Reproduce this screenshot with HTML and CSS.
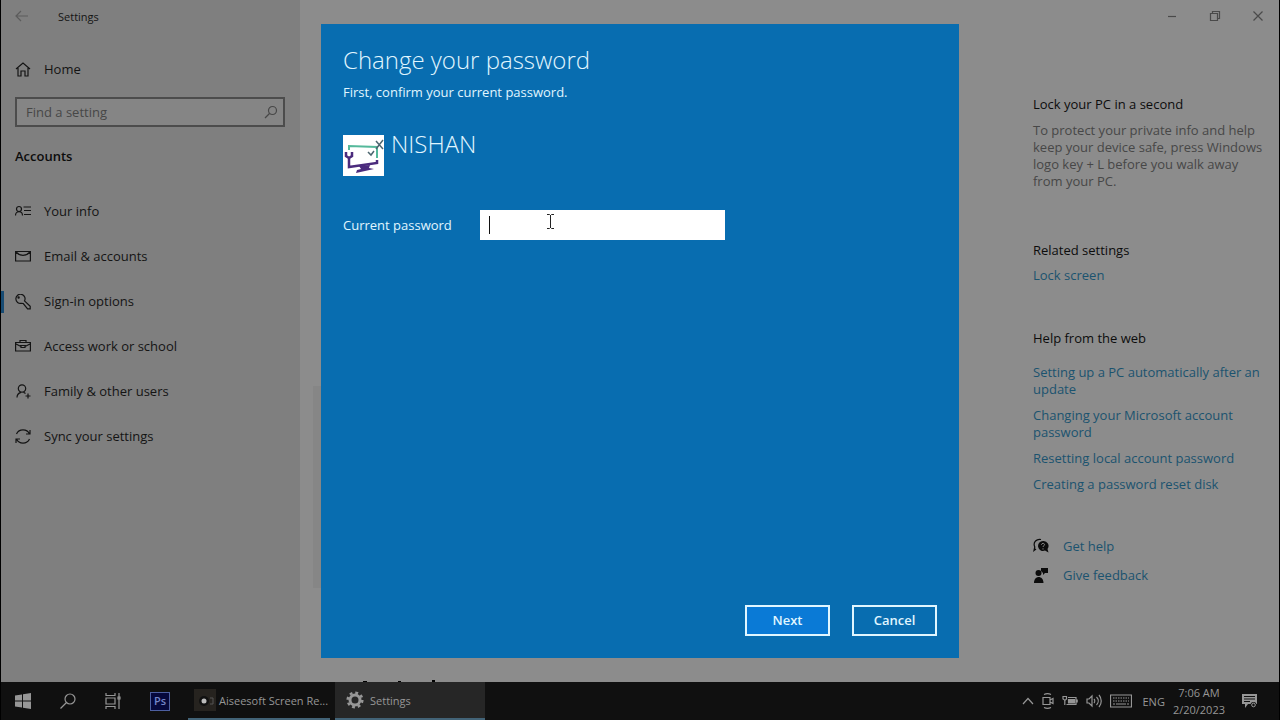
FILE: index.html
```html
<!DOCTYPE html>
<html lang="en">
<head>
<meta charset="utf-8">
<title>Settings</title>
<link rel="stylesheet" href="styles.css">
</head>
<body>
<div class="desktop">
  <div class="window">
    <aside class="sidebar">
      <header class="titlebar">
        <button class="icon-button" type="button" aria-label="Back"><svg width="14" height="12" viewBox="0 0 14 12" class="line faint"><path d="M13 6H2M6 1L1 6l5 5"/></svg></button>
        <span>Settings</span>
      </header>
      <a class="nav-item home" href="#"><svg width="16" height="16" viewBox="0 0 16 16" class="line"><path d="M1 8l7-6 7 6M3 7v8h3v-5h4v5h3V7"/></svg>Home</a>
      <div class="search">
        <input type="text" placeholder="Find a setting" aria-label="Find a setting">
        <svg width="14" height="14" viewBox="0 0 14 14" class="line"><circle cx="8.500" cy="5.500" r="4"/><path d="M5.500 8.500L1 13"/></svg>
      </div>
      <h2 class="section">Accounts</h2>
      <nav class="nav">
        <a class="nav-item" href="#"><svg width="16" height="16" viewBox="0 0 16 16" class="line"><circle cx="4" cy="5" r="2.500"/><path d="M.5 11.500c0-5 7-5 7 0M8.500 3H16M9 6.500h7M9 10.500h7"/></svg>Your info</a>
        <a class="nav-item" href="#"><svg width="16" height="16" viewBox="0 0 16 16" class="line"><path d="M.6 2.500h14.800v9.500H.6zM1 3c4 4.500 10 4.500 14 0"/></svg>Email &amp; accounts</a>
        <a class="nav-item current" href="#" aria-current="page"><svg width="16" height="16" viewBox="0 0 16 16" class="line"><path d="M9.500 7A4.600 4.600 0 1 0 6.500 9.300l1.800.2 4.300 5.300h2.600v-2.500z"/><circle cx="3.600" cy="3.500" r=".6"/></svg>Sign-in options</a>
        <a class="nav-item" href="#"><svg width="16" height="16" viewBox="0 0 16 16" class="line"><path d="M.6 3.500h14.800V12H.6zM5 3V1.500h6V3M1 5l5 2.500M15 5l-5 2.500M6 6.500h4v2H6z"/></svg>Access work or school</a>
        <a class="nav-item" href="#"><svg width="16" height="16" viewBox="0 0 16 16" class="line"><circle cx="7" cy="4.500" r="3.700"/><path d="M2 13.500c0-3 1.500-4.500 4-5.200M8.500 8.300l2 1.200M13 9.500v5M10.500 12h5"/></svg>Family &amp; other users</a>
        <a class="nav-item" href="#"><svg width="16" height="16" viewBox="0 0 16 16" class="line"><path d="M1.500 5C4-.5 12-.5 14.500 5M15 1v4h-4M14.500 10C12 15.500 4 15.500 1.500 10M1 14v-4h4"/></svg>Sync your settings</a>
      </nav>
    </aside>
    <main class="page">
      <header class="controls">
        <button class="icon-button" type="button" aria-label="Minimize"><svg width="12" height="12" viewBox="0 0 12 12" class="line dim"><path d="M2 6.500h8"/></svg></button>
        <button class="icon-button" type="button" aria-label="Restore"><svg width="12" height="12" viewBox="0 0 12 12" class="line dim"><path d="M1.500 3.500h7v7h-7zM3.500 3V1.500h7v7H9"/></svg></button>
        <button class="icon-button" type="button" aria-label="Close"><svg width="12" height="12" viewBox="0 0 12 12" class="line dim"><path d="M1.500 1.500l9 9M10.500 1.500l-9 9"/></svg></button>
      </header>
      <div class="panel"></div>
      <aside class="related">
        <section class="tip">
          <h3>Lock your PC in a second</h3>
          <p>To protect your private info and help keep your device safe, press Windows logo key + L before you walk away from your PC.</p>
        </section>
        <section class="links">
          <h3>Related settings</h3>
          <a href="#">Lock screen</a>
        </section>
        <section class="links web">
          <h3>Help from the web</h3>
          <a href="#">Setting up a PC automatically after an update</a>
          <a href="#">Changing your Microsoft account password</a>
          <a href="#">Resetting local account password</a>
          <a href="#">Creating a password reset disk</a>
        </section>
        <section class="support">
          <a href="#"><svg width="16" height="16" viewBox="0 0 16 16"><path class="line" d="M3 11L1 12.500l.8-3.500C-.5 4 4 .5 8 1.500"/><path d="M10 3a5 5 0 1 0 2 9.600l3.500 2-1-3.600A5 5 0 0 0 10 3z"/><path class="mark" d="M8.500 6.800c0-2 3.200-1.800 3 0-.1 1-1.500 1-1.500 2.200M10 10.300v1.200"/></svg>Get help</a>
          <a href="#"><svg width="16" height="16" viewBox="0 0 16 16"><circle cx="5.500" cy="6" r="3"/><path d="M1 16c0-8 9.500-8 9.500 0zM8 1h7v5h-3l-2 2V6L8 4z"/></svg>Give feedback</a>
        </section>
      </aside>
      <svg class="peek" width="80" height="2" viewBox="0 0 80 2"><path d="M2 1h4v1H2zM37 1h3v1h-3zM71 0h3v2h-3z"/></svg>
    </main>
    <div class="overlay">
      <form class="dialog" role="dialog" aria-labelledby="dialog-title">
        <h1 id="dialog-title">Change your password</h1>
        <p class="lead">First, confirm your current password.</p>
        <div class="user">
          <svg class="avatar" width="41" height="41" viewBox="0 0 41 41"><path fill="#fff" d="M0 0h41v41H0z"/><path d="M6 15v-4l28 1v11" fill="none" stroke="#55b99b" stroke-width="2"/><path d="M33 6l7 8M40 5l-7 9M25 17l3 3 3-4" fill="none" stroke="#4c6670" stroke-width="1.500"/><path d="M3 17v4l3 2 3-2v-4M6 22v10l28-4v-3" fill="none" stroke="#4b2b7d" stroke-width="2.500"/><path d="M16 31l11-1-1 3 5 1-18 4 1-3 4-1z" fill="#4b2b7d"/></svg>
          <span>NISHAN</span>
        </div>
        <div class="field">
          <label for="password">Current password</label>
          <div class="entry">
            <input id="password" type="password">
            <i class="caret"></i>
            <svg class="pointer" width="9" height="17" viewBox="0 0 9 17"><path d="M1 1.500h2.500l1 1 1-1H8M4.500 2v13M1 15.500h2.500l1-1 1 1H8"/></svg>
          </div>
        </div>
        <div class="actions">
          <button class="primary" type="button">Next</button>
          <button type="button">Cancel</button>
        </div>
      </form>
    </div>
  </div>
  <footer class="taskbar">
    <div class="launch">
      <button type="button" aria-label="Start"><svg width="16" height="16" viewBox="0 0 16 16" fill="#969696"><path d="M0 2.500l7-1v6H0zM8 1.300L16 0v7.500H8zM0 8.500h7v6l-7-1zM8 8.500h8V16l-8-1.300z"/></svg></button>
      <button type="button" aria-label="Search"><svg width="16" height="16" viewBox="0 0 16 16" class="line"><circle cx="10" cy="6" r="5"/><path d="M6.500 9.500L.5 15.500"/></svg></button>
      <button type="button" aria-label="Task view"><svg width="16" height="16" viewBox="0 0 16 16" class="line"><path d="M1 0v2.500h9V0M1 5h9v6H1zM1 16v-2.500h9V16M14 0v16"/><path d="M13 4h2v2h-2z"/></svg></button>
      <button type="button" class="ps"><span>Ps</span></button>
    </div>
    <button type="button" class="task"><svg width="22" height="22" viewBox="0 0 22 22"><path fill="#26231f" d="M0 0h22v22H0z"/><circle cx="10" cy="12" r="5" fill="#111"/><circle cx="10" cy="12" r="2.500" fill="#bbb"/><path d="M16 9h3v6h-3" fill="none" stroke="#555"/></svg>Aiseesoft Screen Re...</button>
    <button type="button" class="task active"><svg width="18" height="18" viewBox="0 0 18 18" fill="none" stroke="#969696"><circle cx="9" cy="9" r="5" stroke-width="3"/><circle cx="9" cy="9" r="7.300" stroke-width="2.500" stroke-dasharray="2.870 2.870"/></svg>Settings</button>
    <div class="tray">
      <svg width="12" height="12" viewBox="0 0 12 12" class="line"><path d="M1 9l5-5.500L11 9"/></svg>
      <svg width="12" height="16" viewBox="0 0 12 16" class="line"><path d="M1 4.500h7v7H1zM8 7l3-1.500v5L8 9M2 1.500C4 .5 7 .5 9 1.500M2 14.500c2 1 5 1 7 0"/></svg>
      <svg width="16" height="12" viewBox="0 0 16 12" class="line"><path d="M6 2.500h8v7H4.500M15.200 4.500v3M1 1.500h3.500V4L3.500 5h-1L1 4zM2.800 5v5"/><path d="M6.500 4.500h6v3.500h-6z" fill="#969696"/></svg>
      <svg width="16" height="14" viewBox="0 0 16 14" class="line"><path d="M1 5h2l3-3v10L3 9H1zM8 5c1 1 1 3 0 4M10.500 3c2.300 2.300 2.300 5.700 0 8M13 1c3 3.500 3 8.500 0 12"/></svg>
      <svg width="22" height="14" viewBox="0 0 22 14" class="line"><path d="M.5 1h21v12H.5z"/><path d="M3 4h16M3 7h16" stroke-dasharray="1.500 1"/><path d="M3 10h2M6 10h10M17 10h2"/></svg>
      <span class="lang">ENG</span>
      <time class="clock" datetime="2023-02-20T07:06">7:06 AM<br>2/20/2023</time>
      <svg width="16" height="16" viewBox="0 0 16 16"><path fill="#969696" d="M1 1h15v10H7l-3 4v-4H1z"/><path d="M3 3.500h11M3 6h11M3 8.500h6" stroke="#111"/><circle cx="12.500" cy="12" r="3" fill="#111"/><circle cx="12.500" cy="12" r="1.800" fill="none" stroke="#969696"/></svg>
    </div>
  </footer>
</div>
</body>
</html>
```

FILE: styles.css
```css
* { box-sizing: border-box; }
body {
  margin: 0;
  background: #000;
  color: #141414;
  font: 13px/17px "Open Sans", "Noto Sans", sans-serif;
}
h1, h2, h3, p { margin: 0; font-weight: 400; }
a { color: inherit; text-decoration: none; }
button, input { font: inherit; color: inherit; border: 0; border-radius: 0; padding: 0; background: none; }
svg { flex: none; display: block; }
.line { fill: none; stroke: currentColor; stroke-width: 1.2; }
.dim { color: #4a4a4a; }
.faint { color: #5c5c5c; }

.desktop { min-height: 100vh; display: flex; flex-direction: column; }
.window {
  position: relative;
  flex: 1;
  display: flex;
  margin: 0 1px;
  background: #8c8c8c;
}

.sidebar { width: 299px; flex: none; background: #7f7f7f; }
.titlebar { display: flex; align-items: center; gap: 29px; height: 32px; padding-left: 14px; font-size: 11px; }
.icon-button { display: grid; place-items: center; }
.nav-item { display: flex; align-items: center; gap: 13px; height: 45px; padding-left: 14px; }
.home { height: 36px; margin-top: 19px; }
.search {
  display: flex;
  align-items: center;
  height: 30px;
  margin: 10px 15px 0 14px;
  padding: 0 5px 0 9px;
  border: 2px solid #4c4c4c;
  background: #858585;
  color: #474747;
}
.search input { flex: 1; min-width: 0; outline: 0; }
.search input::placeholder { color: #474747; opacity: 1; }
.section { margin: 20px 14px 24px; font-size: 13px; line-height: 18px; font-weight: 600; color: #0c0c0c; }
.current { background: linear-gradient(#174b73, #174b73) left center / 3px 22px no-repeat; }

.page {
  flex: 1;
  display: grid;
  grid-template-columns: 1fr 237px;
  grid-template-rows: 32px 1fr 2px;
  padding-right: 9px;
}
.controls { grid-column: 1 / -1; display: flex; justify-content: flex-end; gap: 31px; padding-right: 6px; }
.panel { margin: 354px 100px 92px 13px; background: #868686; }
.related { grid-row: 2 / 4; grid-column: 2; padding-top: 63px; }
.related h3 { font-size: 13px; line-height: 18px; color: #0c0c0c; }
.peek { grid-row: 3; grid-column: 1; margin-left: 61px; }
.tip p { margin-top: 9px; color: #474747; }
.links { display: flex; flex-direction: column; gap: 8px; margin-top: 51px; color: #1b536f; }
.web { gap: 9px; margin-top: 45px; }
.web h3 { margin-bottom: 8px; }
.support { display: flex; flex-direction: column; gap: 11px; margin-top: 44px; color: #1b536f; }
.support a { display: flex; align-items: center; gap: 14px; height: 18px; }
.support svg { fill: #0c0c0c; }
.support .line { stroke: #0c0c0c; fill: none; }
.support .mark { fill: none; stroke: #8c8c8c; }

.overlay { position: absolute; inset: 0; display: flex; justify-content: center; padding: 24px 0; }
.dialog {
  display: flex;
  flex-direction: column;
  width: 100%;
  max-width: 638px;
  padding: 18px 22px 22px;
  background: #086db0;
  color: #e0f6ff;
}
.dialog h1 { font-size: 24px; line-height: 36px; font-weight: 300; }
.lead { margin-top: 5px; line-height: 18px; }
.user { display: flex; gap: 7px; margin-top: 33px; font-size: 24px; line-height: 20px; font-weight: 300; }
.avatar { margin-top: 1px; }
.field { display: flex; align-items: center; gap: 28px; margin-top: 34px; }
.field label { width: 109px; white-space: nowrap; }
.entry { position: relative; }
.entry input { display: block; width: 245px; height: 30px; padding: 0 9px; background: #fff; color: #111; outline: 0; }
.caret { position: absolute; left: 9px; top: 6px; width: 1px; height: 18px; background: #111; }
.pointer { position: absolute; left: 66px; top: 3px; fill: none; stroke: #222; }
.actions { display: flex; justify-content: flex-end; gap: 22px; margin-top: auto; }
.actions button { width: 85px; height: 31px; border: 2px solid #e0f6ff; font-weight: 600; }
.actions .primary { background: #0a7ad6; }

.taskbar { display: flex; height: 38px; margin: 0 1px; background: #101010; color: #969696; font-size: 11px; }
.launch { display: flex; width: 187px; gap: 29px; padding-left: 14px; }
.launch button { display: grid; place-items: center; }
.ps span {
  width: 20px;
  height: 19px;
  border: 1px solid #4d5fa0;
  background: #06083c;
  color: #7485c8;
  line-height: 16px;
  font-weight: 600;
}
.task { display: flex; align-items: center; gap: 3px; width: 142px; margin-right: 5px; padding-left: 6px; border-bottom: 2px solid #426377; white-space: nowrap; }
.active { width: 150px; gap: 6px; padding-left: 11px; background: #262626; }
.tray { display: flex; align-items: center; gap: 8px; margin-left: auto; padding-right: 22px; }
.lang { margin-left: 2px; }
.clock { text-align: center; margin-right: 8px; }
```
